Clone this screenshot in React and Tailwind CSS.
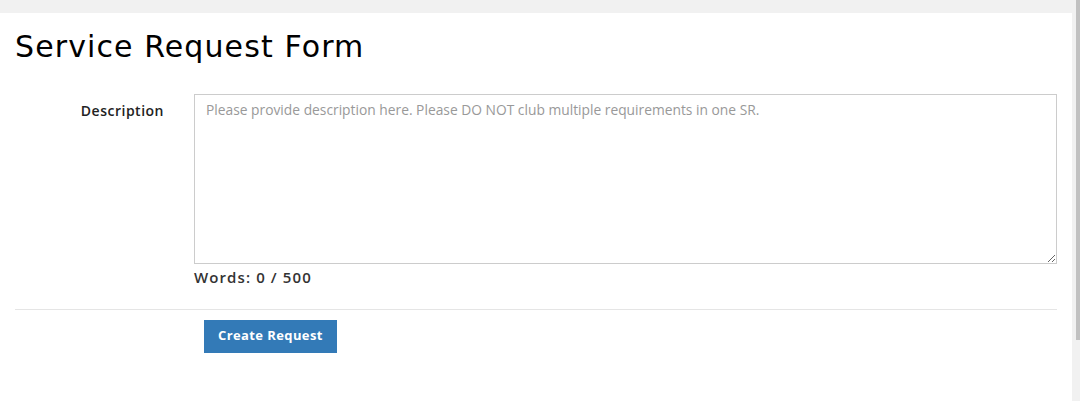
import React, { useState } from 'react';

const MAX_WORDS = 500;

function App() {
  const [text, setText] = useState('');
  const words = text.trim() ? text.trim().split(/\s+/).length : 0;

  return (
    <div className="h-[401px] overflow-hidden bg-[#f1f1f1] flex">
      <div className="flex-1 min-w-0 flex flex-col">
        {/* Top strip */}
        <div className="h-[13px] shrink-0 bg-[#f1f1f1]" />

        {/* Main panel */}
        <div className="flex-1 bg-white pl-[15px] pr-[15px] font-['DejaVu_Sans',sans-serif] text-[#111]">
          <h1 className="pt-[16px] text-[30px] leading-[36px] tracking-[1.1px] text-black">
            Service Request Form
          </h1>

          {/* Description row */}
          <div className="mt-[29px] flex">
            <label className="w-[179px] pr-[30px] pt-[6px] text-right font-['Open_Sans',sans-serif] text-[14px] font-semibold tracking-[0.5px] text-[#222]">
              Description
            </label>
            <div className="flex-1">
              <textarea
                value={text}
                onChange={(e) => setText(e.target.value)}
                placeholder="Please provide description here. Please DO NOT club multiple requirements in one SR."
                className="block h-[170px] w-full resize-y border border-[#ccc] px-[11px] py-[5px] text-[13.8px] font-['Open_Sans',sans-serif] text-[#333] placeholder:text-[#999] outline-none"
              />
              <div className="mt-[2px] font-['Open_Sans',sans-serif] text-[15px] font-semibold tracking-[1.1px] text-[#333]">
                Words: {words} / {MAX_WORDS}
              </div>
            </div>
          </div>

          <hr className="mt-[20px] border-t border-[#e5e5e5]" />

          <div className="mt-[10px] pl-[189px]">
            <button className="h-[33px] bg-[#337ab7] px-[14px] font-['Open_Sans',sans-serif] text-[13px] font-bold tracking-[0.4px] text-white">
              Create Request
            </button>
          </div>
        </div>
      </div>

      {/* Scrollbar */}
      <div className="w-[8px] shrink-0 flex">
        <div className="w-[4px] bg-[#f1f1f1]" />
        <div className="w-[4px] flex flex-col">
          <div className="h-[340px] bg-[#c1c1c1]" />
          <div className="flex-1 bg-[#f1f1f1]" />
        </div>
      </div>
    </div>
  );
}

export default App;
